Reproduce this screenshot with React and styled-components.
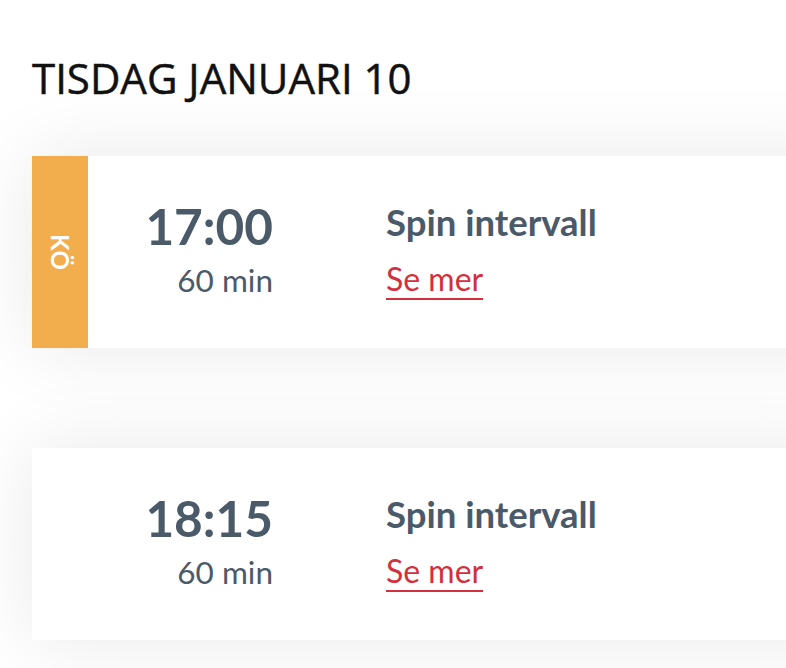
import React from 'react';
import styled, { createGlobalStyle } from 'styled-components';

const colors = {
  slate: '#4b5a69',
  red: '#d3303e',
  orange: '#f2ad4d',
  heading: '#111111',
};

const GlobalStyle = createGlobalStyle`
  html, body {
    margin: 0;
    padding: 0;
    background: #ffffff;
    overflow: hidden;
  }
  body {
    font-family: Lato, "Open Sans", sans-serif;
  }
`;

const Page = styled.div`
  padding: 49px 0 0 32px;
  height: 668px;
  box-sizing: border-box;
  overflow: hidden;
`;

const DayHeading = styled.h2`
  margin: 0 0 50px;
  font-family: "Open Sans", sans-serif;
  font-weight: 400;
  font-size: 42px;
  line-height: 57px;
  color: ${colors.heading};
  -webkit-text-stroke: 0.5px ${colors.heading};
`;

const List = styled.div`
  display: flex;
  flex-direction: column;
  gap: 100px;
  margin-right: -60px;
`;

const Card = styled.div`
  display: flex;
  height: 192px;
  background: #fff;
  box-shadow: 0 0 80px rgba(0, 0, 0, 0.09);
`;

const Status = styled.div`
  width: 56px;
  flex-shrink: 0;
  display: flex;
  align-items: center;
  justify-content: center;
  background: ${p => (p.$label ? colors.orange : 'transparent')};
  color: #fff;
  font-weight: 700;
  font-size: 24px;
  letter-spacing: 1px;
  writing-mode: vertical-rl;
`;

const TimeCol = styled.div`
  width: 185px;
  flex-shrink: 0;
  padding-top: 41px;
  display: flex;
  flex-direction: column;
  align-items: flex-end;
  color: ${colors.slate};
`;

const Time = styled.div`
  font-weight: 700;
  font-size: 49.5px;
  line-height: 1.2;
`;

const Duration = styled.div`
  margin-top: 6px;
  font-size: 31.5px;
  line-height: 1.2;
`;

const Info = styled.div`
  padding: 45px 0 0 113px;
  display: flex;
  flex-direction: column;
  align-items: flex-start;
`;

const Title = styled.div`
  font-weight: 700;
  font-size: 36.5px;
  line-height: 1.2;
  color: ${colors.slate};
`;

const MoreLink = styled.a`
  display: inline-block;
  margin-top: 15px;
  font-size: 32px;
  line-height: 1.2;
  color: ${colors.red};
  text-decoration: none;
  border-bottom: 2px solid ${colors.red};
  cursor: pointer;
`;

const classes = [
  { time: '17:00', duration: '60 min', name: 'Spin intervall', status: 'KÖ' },
  { time: '18:15', duration: '60 min', name: 'Spin intervall', status: null },
];

const App = () => {
  return (
    <>
      <GlobalStyle />
      <Page>
        <DayHeading>TISDAG JANUARI 10</DayHeading>
        <List>
          {classes.map((c, i) => (
            <Card key={i}>
              <Status $label={c.status}>{c.status}</Status>
              <TimeCol>
                <Time>{c.time}</Time>
                <Duration>{c.duration}</Duration>
              </TimeCol>
              <Info>
                <Title>{c.name}</Title>
                <MoreLink>Se mer</MoreLink>
              </Info>
            </Card>
          ))}
        </List>
      </Page>
    </>
  );
};

export default App;
